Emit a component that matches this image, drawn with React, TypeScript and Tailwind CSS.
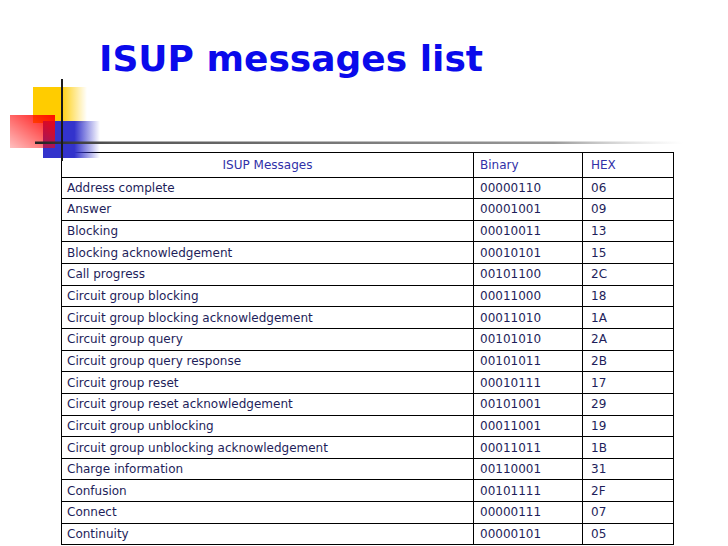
const rows: [string, string, string][] = [
  ['Address complete', '00000110', '06'],
  ['Answer', '00001001', '09'],
  ['Blocking', '00010011', '13'],
  ['Blocking acknowledgement', '00010101', '15'],
  ['Call progress', '00101100', '2C'],
  ['Circuit group blocking', '00011000', '18'],
  ['Circuit group blocking acknowledgement', '00011010', '1A'],
  ['Circuit group query', '00101010', '2A'],
  ['Circuit group query response', '00101011', '2B'],
  ['Circuit group reset', '00010111', '17'],
  ['Circuit group reset acknowledgement', '00101001', '29'],
  ['Circuit group unblocking', '00011001', '19'],
  ['Circuit group unblocking acknowledgement', '00011011', '1B'],
  ['Charge information', '00110001', '31'],
  ['Confusion', '00101111', '2F'],
  ['Connect', '00000111', '07'],
  ['Continuity', '00000101', '05'],
];

function Decoration() {
  return (
    <svg
      className="absolute left-0 top-0 pointer-events-none"
      width="728"
      height="170"
      viewBox="0 0 728 170"
    >
      <defs>
        <linearGradient id="yel" x1="0" y1="0" x2="1" y2="0">
          <stop offset="0" stopColor="#ffcc00" />
          <stop offset="0.5" stopColor="#ffcc00" />
          <stop offset="1" stopColor="#ffcc00" stopOpacity="0" />
        </linearGradient>
        <linearGradient id="blu" x1="0" y1="0" x2="1" y2="0">
          <stop offset="0" stopColor="#3333cc" />
          <stop offset="0.55" stopColor="#3333cc" />
          <stop offset="1" stopColor="#3333cc" stopOpacity="0" />
        </linearGradient>
        <linearGradient id="red" x1="0" y1="1" x2="1" y2="0">
          <stop offset="0" stopColor="#ff0000" stopOpacity="0.25" />
          <stop offset="1" stopColor="#ff0000" stopOpacity="0.95" />
        </linearGradient>
        <linearGradient id="line" x1="0" y1="0" x2="1" y2="0">
          <stop offset="0" stopColor="#222" />
          <stop offset="0.12" stopColor="#555" />
          <stop offset="0.8" stopColor="#999" />
          <stop offset="1" stopColor="#ccc" stopOpacity="0" />
        </linearGradient>
      </defs>
      <rect x="33" y="87" width="54" height="36" fill="url(#yel)" />
      <rect x="43" y="121" width="57" height="37" fill="url(#blu)" />
      <rect x="10" y="115" width="45" height="33" fill="url(#red)" />
      <rect x="35" y="141.5" width="648" height="2.5" fill="url(#line)" />
      <rect x="61" y="79" width="2" height="82" fill="#1a1a1a" />
    </svg>
  );
}

export default function App() {
  return (
    <div className="relative w-[728px] h-[546px] overflow-hidden bg-white font-['DejaVu_Sans',Verdana,sans-serif]">
      <h1 className="pt-[41px] pl-[99px] text-[36px] leading-[36px] font-bold text-[#0a0aeb]">
        ISUP messages list
      </h1>

      <div className="mt-[75px] ml-[61px] w-[613px] border-t border-l border-black text-[12px]">
        <div className="grid grid-cols-[412px_109px_91px] h-[24.5px] text-[#3030a8]">
          <div className="flex items-center justify-center border-r border-b border-black">
            ISUP Messages
          </div>
          <div className="flex items-center pl-[6px] border-r border-b border-black">Binary</div>
          <div className="flex items-center pl-[8px] border-r border-b border-black">HEX</div>
        </div>
        {rows.map(([name, bin, hex]) => (
          <div
            key={name}
            className="grid grid-cols-[412px_109px_91px] h-[21.65px] text-[#1e1e5a]"
          >
            <div className="flex items-center pl-[5px] border-r border-b border-black">{name}</div>
            <div className="flex items-center pl-[6px] border-r border-b border-black">{bin}</div>
            <div className="flex items-center pl-[8px] border-r border-b border-black">{hex}</div>
          </div>
        ))}
      </div>

      <Decoration />
    </div>
  );
}
